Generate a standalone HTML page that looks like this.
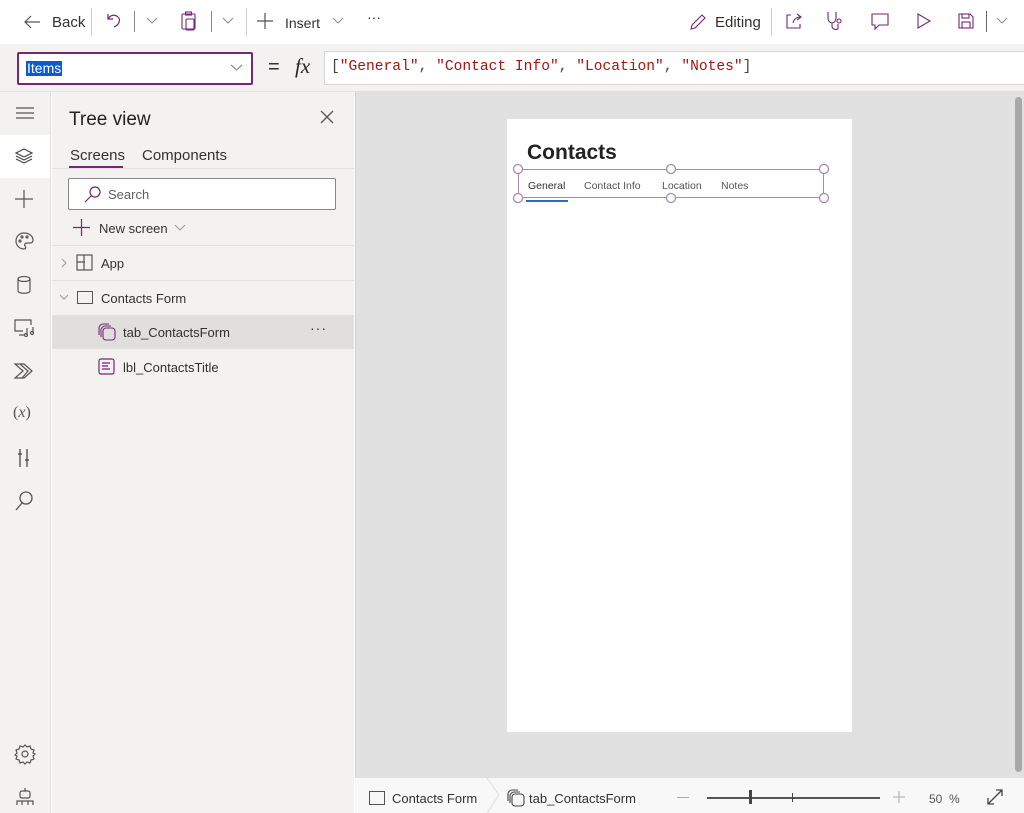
<!DOCTYPE html>
<html><head><style>
*{box-sizing:border-box;margin:0;padding:0}
body{width:1024px;height:813px;overflow:hidden;position:relative;background:#fff;font-family:"Liberation Sans",sans-serif;color:#323130}
.a{position:absolute}
svg{position:absolute;overflow:visible}
.t{font-size:14px;color:#323130;white-space:nowrap}
</style></head><body>
<!-- top toolbar -->
<div class="a" style="left:0;top:0;width:1024px;height:44px;background:#fff"></div>
<svg style="left:22px;top:12px" width="20" height="20" fill="none" stroke="#555" stroke-width="1.2"><path d="M3 10h15M9 4L3 10l6 6"/></svg>
<div class="a t" style="left:52px;top:14px;font-size:15px">Back</div>
<div class="a" style="left:91px;top:8px;width:1px;height:28px;background:#ccc"></div>
<svg style="left:104px;top:10px" width="20" height="20" fill="none" stroke="#742774" stroke-width="1.2"><path d="M4 4v5h5M4 9c2-4 7-5 10-2 3 3 1 8-4 10"/></svg>
<div class="a" style="left:134px;top:11px;width:1px;height:21px;background:#888"></div>
<svg style="left:146px;top:17px" width="12" height="8" fill="none" stroke="#888"><path d="M1 1l5 5 5-5"/></svg>
<svg style="left:181px;top:11px" width="18" height="20" fill="none" stroke="#742774" stroke-width="1.1"><rect x="1" y="3" width="13" height="15" rx="1"/><rect x="5" y="8" width="8" height="11" rx="1"/><rect x="4.5" y="1" width="6" height="3"/></svg>
<div class="a" style="left:211px;top:11px;width:1px;height:21px;background:#888"></div>
<svg style="left:222px;top:17px" width="12" height="8" fill="none" stroke="#888"><path d="M1 1l5 5 5-5"/></svg>
<div class="a" style="left:246px;top:8px;width:1px;height:28px;background:#ccc"></div>
<svg style="left:257px;top:12px" width="18" height="18" fill="none" stroke="#555" stroke-width="1.2"><path d="M8 1v16M0 9h16"/></svg>
<div class="a t" style="left:285px;top:15px">Insert</div>
<svg style="left:332px;top:17px" width="12" height="8" fill="none" stroke="#888"><path d="M1 1l5 5 5-5"/></svg>
<div class="a t" style="left:367px;top:9px;font-size:14px">···</div>
<svg style="left:689px;top:13px" width="18" height="18" fill="none" stroke="#742774" stroke-width="1.1"><path d="M2 16l1-4L13 2l3 3L6 15z"/></svg>
<div class="a t" style="left:715px;top:14px;font-size:15px">Editing</div>
<div class="a" style="left:771px;top:8px;width:1px;height:28px;background:#ccc"></div>
<svg style="left:785px;top:12px" width="18" height="18" fill="none" stroke="#742774" stroke-width="1.1"><path d="M6 3H2v13h13v-4M8 11c1-4 4-6 8-6M12 2l4 3-4 3"/></svg>
<svg style="left:826px;top:11px" width="20" height="20" fill="none" stroke="#742774" stroke-width="1.1"><path d="M2 1v6c0 3 2 5 4 5s4-2 4-5V1M6 12v3c0 3 3 4 6 3v-5"/><circle cx="13" cy="10" r="2"/></svg>
<svg style="left:870px;top:12px" width="20" height="18" fill="none" stroke="#742774" stroke-width="1.1"><path d="M2 2h16v11H9l-4 4v-4H2z"/></svg>
<svg style="left:916px;top:12px" width="16" height="18" fill="none" stroke="#742774" stroke-width="1.1"><path d="M2 2l12 7-12 7z"/></svg>
<svg style="left:957px;top:12px" width="18" height="18" fill="none" stroke="#742774" stroke-width="1.1"><path d="M2 2h11l3 3v11H2z"/><rect x="5" y="2" width="7" height="4"/><rect x="5" y="10" width="8" height="6"/></svg>
<div class="a" style="left:986px;top:11px;width:1px;height:21px;background:#666"></div>
<svg style="left:996px;top:17px" width="12" height="8" fill="none" stroke="#888"><path d="M1 1l5 5 5-5"/></svg>

<!-- formula bar -->
<div class="a" style="left:0;top:44px;width:1024px;height:48px;background:#f3f2f1;border-bottom:1px solid #e1dfdd"></div>
<div class="a" style="left:17px;top:52px;width:236px;height:33px;background:#fff;border:2px solid #742774;border-radius:2px"></div>
<div class="a" style="left:26px;top:61px;background:#0b5ad4;color:#fff;font-size:14px;line-height:15px;padding:0 1px">Items</div>
<svg style="left:230px;top:64px" width="13" height="8" fill="none" stroke="#777"><path d="M1 1l5.5 5 5.5-5"/></svg>
<div class="a t" style="left:268px;top:56px;font-size:20px">=</div>
<div class="a" style="left:295px;top:54px;font-family:'Liberation Serif',serif;font-style:italic;font-size:21px;color:#222">fx</div>
<div class="a" style="left:324px;top:51px;width:700px;height:34px;background:#fff;border:1px solid #d6d6d6;border-right:none"></div>
<div class="a" style="left:331px;top:59px;font-family:'Liberation Mono',monospace;font-size:14.6px;color:#a31515;white-space:nowrap"><span style="color:#444">[</span>"General"<span style="color:#444">, </span>"Contact Info"<span style="color:#444">, </span>"Location"<span style="color:#444">, </span>"Notes"<span style="color:#444">]</span></div>

<!-- left rail -->
<div class="a" style="left:0;top:92px;width:51px;height:721px;background:#f3f2f1;border-right:1px solid #e1dfdd"></div>
<div class="a" style="left:0;top:135px;width:50px;height:43px;background:#fff"></div>
<svg style="left:15px;top:106px" width="20" height="14" fill="none" stroke="#555" stroke-width="1.2"><path d="M1 2h18M1 7h18M1 12h18"/></svg>
<svg style="left:15px;top:147px" width="18" height="18" fill="none" stroke="#444" stroke-width="1.2"><path d="M9 2l8 4-8 4-8-4zM1 9l8 4 8-4M1 12l8 4 8-4"/></svg>
<svg style="left:15px;top:190px" width="18" height="18" fill="none" stroke="#555" stroke-width="1.2"><path d="M9 0v18M0 9h18"/></svg>
<svg style="left:15px;top:232px" width="19" height="19" fill="none" stroke="#555" stroke-width="1.2"><path d="M9 1C4 1 1 5 1 9s3 8 8 8c2 0 2-2 1-3s0-3 2-3h3c2 0 3-1 3-3 0-4-4-7-9-7z"/><circle cx="5" cy="9" r="1"/><circle cx="7" cy="5" r="1"/><circle cx="12" cy="5" r="1"/></svg>
<svg style="left:17px;top:276px" width="14" height="18" fill="none" stroke="#555" stroke-width="1.2"><ellipse cx="7" cy="3" rx="6" ry="2.5"/><path d="M1 3v12c0 3 12 3 12 0V3"/></svg>
<svg style="left:14px;top:319px" width="22" height="18" fill="none" stroke="#555" stroke-width="1.2"><path d="M9 12H1V1h16v5M5 16h5"/><path d="M13 9v7M19 8v6"/><circle cx="12" cy="16" r="1.5"/><circle cx="18" cy="14" r="1.5"/></svg>
<svg style="left:14px;top:362px" width="20" height="18" fill="none" stroke="#555" stroke-width="1.2"><path d="M1 2h9l8 7-8 7H1l8-7zM6 2l8 7-6 7"/></svg>
<div class="a" style="left:13px;top:404px;font-family:'Liberation Serif',serif;font-size:16px;color:#555">(<i>x</i>)</div>
<svg style="left:17px;top:448px" width="14" height="20" fill="none" stroke="#555" stroke-width="1.4"><path d="M3 1v18M10 1v18M1 6h4M8 12h4"/></svg>
<svg style="left:15px;top:491px" width="18" height="20" fill="none" stroke="#555" stroke-width="1.3"><circle cx="11" cy="7" r="6"/><path d="M7 12L1 19"/></svg>
<svg style="left:15px;top:744px" width="20" height="20" fill="none" stroke="#555" stroke-width="1.2"><circle cx="10" cy="10" r="3"/><path d="M10 1l2 2 3-1 1 3 3 1-1 3 2 1-2 2 1 3-3 1-1 3-3-1-2 2-2-2-3 1-1-3-3-1 1-3-2-1 2-2-1-3 3-1 1-3 3 1z"/></svg>
<svg style="left:16px;top:787px" width="18" height="20" fill="none" stroke="#555" stroke-width="1.2"><rect x="4" y="4" width="10" height="7" rx="2"/><path d="M9 1v3M1 18v-4h16v4M6 14v4M12 14v4"/></svg>

<!-- tree panel -->
<div class="a" style="left:52px;top:92px;width:302px;height:721px;background:#f3f2f1"></div>
<div class="a t" style="left:69px;top:109px;font-size:19px;color:#222">Tree view</div>
<svg style="left:320px;top:110px" width="14" height="14" fill="none" stroke="#555" stroke-width="1.3"><path d="M1 1l12 12M13 1L1 13"/></svg>
<div class="a t" style="left:70px;top:147px;font-size:15px">Screens</div>
<div class="a" style="left:69px;top:166px;width:54px;height:3px;background:#742774"></div>
<div class="a t" style="left:142px;top:147px;font-size:15px">Components</div>
<div class="a" style="left:52px;top:168px;width:302px;height:1px;background:#e1dfdd"></div>
<div class="a" style="left:68px;top:178px;width:268px;height:32px;background:#fff;border:1px solid #8a8886;border-radius:2px"></div>
<svg style="left:84px;top:186px" width="17" height="17" fill="none" stroke="#742774" stroke-width="1.2"><circle cx="11" cy="6" r="5"/><path d="M7 10l-6 6"/></svg>
<div class="a t" style="left:108px;top:187px;font-size:13px;color:#605e5c">Search</div>
<svg style="left:73px;top:219px" width="17" height="17" fill="none" stroke="#742774" stroke-width="1.2"><path d="M8.5 0v17M0 8.5h17"/></svg>
<div class="a t" style="left:99px;top:221px;font-size:13px">New screen</div>
<svg style="left:174px;top:224px" width="12" height="8" fill="none" stroke="#999"><path d="M1 1l5 5 5-5"/></svg>
<div class="a" style="left:52px;top:245px;width:302px;height:1px;background:#e1dfdd"></div>
<svg style="left:61px;top:258px" width="6" height="10" fill="none" stroke="#999"><path d="M1 1l4 4-4 4"/></svg>
<svg style="left:76px;top:254px" width="17" height="17" fill="none" stroke="#555" stroke-width="1.2"><rect x="1" y="1" width="15" height="15"/><path d="M1 8h8M8 1v15"/></svg>
<div class="a t" style="left:101px;top:256px;font-size:13px">App</div>
<div class="a" style="left:52px;top:280px;width:302px;height:1px;background:#e1dfdd"></div>
<svg style="left:59px;top:294px" width="10" height="6" fill="none" stroke="#999"><path d="M1 1l4 4 4-4"/></svg>
<div class="a" style="left:77px;top:291px;width:16px;height:13px;border:1.2px solid #555"></div>
<div class="a t" style="left:101px;top:291px;font-size:13px">Contacts Form</div>
<div class="a" style="left:52px;top:315px;width:302px;height:34px;background:#e1dfdd"></div>
<svg style="left:98px;top:323px" width="19" height="19" fill="none" stroke="#742774" stroke-width="1.1"><path d="M1 12V5c0-2 2-4 4-4h6M3 14V7c0-2 2-4 4-4h6"/><rect x="5" y="5" width="12" height="12" rx="3"/></svg>
<div class="a t" style="left:123px;top:325px;font-size:13px">tab_ContactsForm</div>
<div class="a t" style="left:310px;top:320px;font-size:14px;letter-spacing:1px">···</div>
<svg style="left:98px;top:358px" width="18" height="18" fill="none" stroke="#742774" stroke-width="1.2"><rect x="1" y="1" width="15" height="15" rx="2"/><path d="M4 5h8M4 8h6M4 11h8"/></svg>
<div class="a t" style="left:123px;top:360px;font-size:13px">lbl_ContactsTitle</div>

<!-- canvas -->
<div class="a" style="left:355px;top:92px;width:669px;height:685px;background:#e1e1e1;border-left:1px solid #d0d0d0"></div>
<div class="a" style="left:1015px;top:97px;width:7px;height:675px;background:#a8a8a8;border-radius:4px"></div>
<div class="a" style="left:507px;top:119px;width:345px;height:613px;background:#fff"></div>
<div class="a" style="left:527px;top:141px;font-size:21px;color:#222;font-weight:600">Contacts</div>
<div class="a" style="left:518px;top:169px;width:306px;height:29px;border:1.5px solid #a78ba7"></div>
<div class="a t" style="left:528px;top:180px;font-size:10.5px">General</div>
<div class="a" style="left:526px;top:200px;width:42px;height:2px;background:#2a6ebb"></div>
<div class="a t" style="left:584px;top:180px;font-size:10.5px;color:#555">Contact Info</div>
<div class="a t" style="left:662px;top:180px;font-size:10.5px;color:#555">Location</div>
<div class="a t" style="left:721px;top:180px;font-size:10.5px;color:#555">Notes</div>
<svg style="left:0;top:0" width="1" height="1"><g fill="#fff" stroke="#a78ba7" stroke-width="1.3"><circle cx="518" cy="169" r="4.5"/><circle cx="671" cy="169" r="4.5"/><circle cx="824" cy="169" r="4.5"/><circle cx="518" cy="198" r="4.5"/><circle cx="671" cy="198" r="4.5"/><circle cx="824" cy="198" r="4.5"/></g></svg>

<!-- bottom bar -->
<div class="a" style="left:355px;top:777px;width:669px;height:36px;background:#f8f8f8;border-top:1px solid #e1dfdd"></div>
<div class="a" style="left:369px;top:791px;width:16px;height:14px;border:1.2px solid #555"></div>
<div class="a t" style="left:392px;top:791px;font-size:13px">Contacts Form</div>
<svg style="left:486px;top:778px" width="14" height="35" fill="none" stroke="#ddd"><path d="M1 0l12 17L1 35"/></svg>
<svg style="left:507px;top:789px" width="18" height="18" fill="none" stroke="#444" stroke-width="1.1"><path d="M1 12V5c0-2 2-4 4-4h6M3 14V7c0-2 2-4 4-4h6"/><rect x="5" y="5" width="12" height="12" rx="3"/></svg>
<div class="a t" style="left:529px;top:791px;font-size:13px">tab_ContactsForm</div>
<div class="a" style="left:677px;top:797px;width:12px;height:1px;background:#aaa"></div>
<div class="a" style="left:707px;top:797px;width:173px;height:2px;background:#555"></div>
<div class="a" style="left:749px;top:790px;width:3px;height:14px;background:#444"></div>
<div class="a" style="left:792px;top:793px;width:1px;height:9px;background:#444"></div>
<svg style="left:893px;top:791px" width="12" height="12" fill="none" stroke="#aaa"><path d="M6 0v12M0 6h12"/></svg>
<div class="a t" style="left:929px;top:792px;font-size:12px;color:#555">50 &nbsp;%</div>
<svg style="left:987px;top:789px" width="16" height="16" fill="none" stroke="#444" stroke-width="1.3"><path d="M1 15L15 1M9 1h6v6M1 9v6h6"/></svg>
</body></html>
